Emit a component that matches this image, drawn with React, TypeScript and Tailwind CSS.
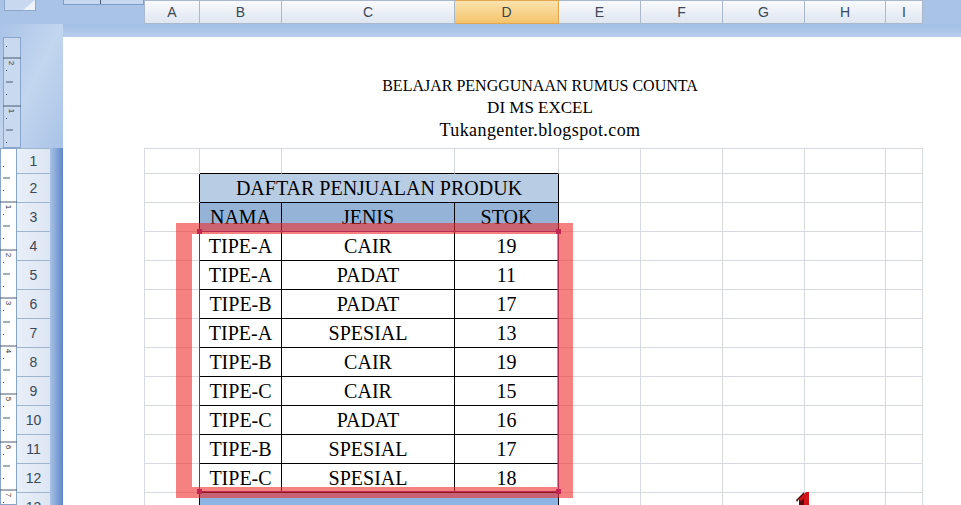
import React from "react";

const COLS = [
  { label: "A", w: 55 },
  { label: "B", w: 82 },
  { label: "C", w: 173 },
  { label: "D", w: 104 },
  { label: "E", w: 82 },
  { label: "F", w: 82 },
  { label: "G", w: 82 },
  { label: "H", w: 81 },
  { label: "I", w: 37 },
];

const ROWS = [25, 29, 29, 29, 29, 29, 29, 29, 29, 29, 29, 29, 29];

const DATA = [
  ["TIPE-A", "CAIR", "19"],
  ["TIPE-A", "PADAT", "11"],
  ["TIPE-B", "PADAT", "17"],
  ["TIPE-A", "SPESIAL", "13"],
  ["TIPE-B", "CAIR", "19"],
  ["TIPE-C", "CAIR", "15"],
  ["TIPE-C", "PADAT", "16"],
  ["TIPE-B", "SPESIAL", "17"],
  ["TIPE-C", "SPESIAL", "18"],
];

function Ruler({ top, width, height, fill }: { top: number; width: number; height: number; fill: string }) {
  const ticks: React.ReactNode[] = [];
  for (let y = 10; y < 520; y += 12) {
    const local = y - top;
    if (local < 1 || local > height - 1) continue;
    const d = (((y - 154) % 48) + 48) % 48;
    if (d === 0) {
      const n = Math.abs((y - 154) / 48);
      if (n === 0) continue;
      ticks.push(
        <g key={y}>
          <line x1={0} x2={width} y1={local} y2={local} stroke="#4a5a70" strokeWidth={1} />
          <text
            x={8}
            y={local + 5}
            fontSize={8}
            fill="#333"
            textAnchor="middle"
            dominantBaseline="middle"
            transform={`rotate(90 8 ${local + 5})`}
            fontFamily="Liberation Sans, sans-serif"
          >
            {n}
          </text>
        </g>
      );
    } else if (d === 24) {
      ticks.push(<line key={y} x1={3} x2={10} y1={local} y2={local} stroke="#4a5a70" strokeWidth={1} />);
    } else {
      ticks.push(<rect key={y} x={3} y={local} width={1} height={1} fill="#4a5a70" />);
    }
  }
  return (
    <svg width={width} height={height} className="block shrink-0">
      <rect x={0.5} y={0.5} width={width - 1} height={height - 1} fill={fill} stroke="#8aa5cc" />
      {ticks}
    </svg>
  );
}

function ColumnHeaders() {
  return (
    <div className="flex h-[24px] shrink-0">
      <div className="w-[144px] shrink-0 flex items-start">
        <div className="ml-[4px] w-[32px] h-[11px] border border-t-0 border-[#8ea8cc] bg-[#c8d9ef] relative overflow-hidden">
          <svg width="30" height="10" className="block">
            <polygon points="30,0 30,10 18,10" fill="#eef3fa" />
          </svg>
        </div>
        <div className="ml-[27px] w-[81px] h-[5px] border border-t-0 border-[#7f9cc8] bg-[#c6d8ef] flex">
          <div className="ml-[36px] w-px h-[4px] bg-[#4a5a70]" />
        </div>
      </div>
      {COLS.map((c, i) => (
        <div
          key={c.label}
          style={{ width: i === 0 ? c.w + 1 : c.w }}
          className={
            c.label === "D"
              ? "shrink-0 h-[24px] border-r border-b border-t border-[#e2a651] bg-gradient-to-b from-[#fbe3ad] to-[#f4c46a] flex items-center justify-center text-[14px] text-[#3b4352]"
              : i === 0
              ? "shrink-0 h-[24px] border-l border-r border-b border-t border-[#a9b8cc] bg-gradient-to-b from-[#f8fafd] to-[#dfe6f0] flex items-center justify-center text-[14px] text-[#3b4858]"
              : "shrink-0 h-[24px] border-r border-b border-t border-[#a9b8cc] bg-gradient-to-b from-[#f8fafd] to-[#dfe6f0] flex items-center justify-center text-[14px] text-[#3b4858]"
          }
        >
          {c.label}
        </div>
      ))}
      <div className="flex-1" />
    </div>
  );
}

function Gutter() {
  return (
    <div className="w-[63px] shrink-0 flex flex-col">
      <div className="h-[124px] shrink-0 pl-[3px] pt-[13px] bg-gradient-to-br from-[#a9c3e7] via-[#c3d6ef] to-[#a9c3e7]">
        <Ruler top={37} width={18} height={111} fill="#c9daf0" />
      </div>
      <div className="flex flex-1 min-h-0">
        <div className="w-[17px] shrink-0 bg-white">
          <Ruler top={148} width={17} height={357} fill="#ffffff" />
        </div>
        <div className="w-[33px] shrink-0 flex flex-col border-t border-[#9fb4cf]">
          {ROWS.map((h, i) => (
            <div
              key={i}
              style={{ height: h }}
              className="shrink-0 border-b border-[#9fb4cf] bg-gradient-to-r from-[#e9eff8] to-[#dce6f3] flex items-center justify-center text-[14px] text-[#3b4858]"
            >
              {i + 1}
            </div>
          ))}
        </div>
        <div className="w-[13px] shrink-0 bg-gradient-to-r from-[#a9c3e7] to-[#5f87c6]" />
      </div>
    </div>
  );
}

const GRID = "border-r border-b border-[#d6d9de]";
const SERIF = "font-['Liberation_Serif',serif] text-[20px] leading-none text-black flex items-center justify-center";

function Sheet() {
  const cells: React.ReactNode[] = [];
  ROWS.forEach((_, ri) => {
    const r = ri + 1;
    // column A
    cells.push(
      <div
        key={`${r}-A`}
        className={
          r >= 4 && r <= 12
            ? "border-r border-b border-r-[#23288c] border-b-[#d6d9de]"
            : r >= 2
            ? "border-r border-b border-r-black border-b-[#d6d9de]"
            : GRID
        }
      />
    );
    // columns B-D
    if (r === 1) {
      for (let c = 1; c <= 3; c++) {
        cells.push(<div key={`${r}-${c}`} className="border-r border-b border-r-[#d6d9de] border-b-black" />);
      }
    } else if (r === 2) {
      cells.push(
        <div key="title" className={`col-span-3 border-r border-b border-black bg-[#b8cce4] ${SERIF}`}>
          DAFTAR PENJUALAN PRODUK
        </div>
      );
    } else if (r === 3) {
      ["NAMA", "JENIS", "STOK"].forEach((t) =>
        cells.push(
          <div key={t} className={`border-r border-b border-black bg-[#95b3d7] ${SERIF}`}>
            {t}
          </div>
        )
      );
    } else if (r <= 12) {
      DATA[r - 4].forEach((t, c) =>
        cells.push(
          <div key={`${r}-${c}`} className={`border-r border-b border-black bg-white ${SERIF}`}>
            {t}
          </div>
        )
      );
    } else {
      cells.push(<div key="total" className="col-span-3 border-r border-b border-black bg-[#8db4e2]" />);
    }
    // columns E-I
    for (let c = 4; c <= 8; c++) {
      cells.push(<div key={`${r}-${c}`} className={GRID} />);
    }
  });

  return (
    <div className="relative mt-[7px] w-max grid grid-cols-[55px_82px_173px_104px_82px_82px_82px_81px_37px] grid-rows-[25px_repeat(12,29px)] border-l border-t border-[#d6d9de]">
      {cells}

      {/* selected range B4:D12 */}
      <div className="absolute left-[54px] top-[82px] w-[360px] h-[261px] border border-[#6d2b8c] pointer-events-none">
        <div className="absolute -left-[3px] -top-[3px] w-[5px] h-[5px] bg-[#7a1f86]" />
        <div className="absolute -right-[3px] -top-[3px] w-[5px] h-[5px] bg-[#7a1f86]" />
        <div className="absolute -left-[3px] -bottom-[3px] w-[5px] h-[5px] bg-[#7a1f86]" />
        <div className="absolute -right-[3px] -bottom-[3px] w-[5px] h-[5px] bg-[#7a1f86]" />
      </div>

      {/* red highlight frame */}
      <div className="absolute left-[31px] top-[74px] w-[397px] h-[275px] border-l-[16px] border-r-[16px] border-t-[11px] border-b-[11px] border-[rgba(240,45,45,0.6)] pointer-events-none" />

      {/* red "1" marker peeking in at the bottom */}
      <svg className="absolute left-[647px] top-[342px]" width="20" height="16" viewBox="0 0 20 16">
        <polygon points="4,9 12,1 12,16 7,16 7,8 5,11" fill="#5a0d0d" />
        <polygon points="7,8 14,1 17,1 17,16 12,16 12,7 9,10" fill="#d2141a" />
      </svg>
    </div>
  );
}

function Page() {
  return (
    <div className="flex-1 min-h-0 bg-white pl-[81px] pt-[38px] overflow-hidden">
      <div className="w-[792px] text-center font-['Liberation_Serif',serif] text-black leading-[22px]">
        <div className="text-[16px]">BELAJAR PENGGUNAAN RUMUS COUNTA</div>
        <div className="text-[17px]">DI MS EXCEL</div>
        <div className="text-[18px] tracking-[0.4px]">Tukangenter.blogspot.com</div>
      </div>
      <Sheet />
    </div>
  );
}

export default function App() {
  return (
    <div className="w-[961px] h-[505px] overflow-hidden bg-[#a9c3e7] flex flex-col font-['Liberation_Sans',sans-serif]">
      <ColumnHeaders />
      <div className="flex flex-1 min-h-0">
        <Gutter />
        <div className="flex-1 flex flex-col min-h-0">
          <div className="h-[13px] shrink-0 bg-gradient-to-b from-[#a3bfe5] to-[#b6ccec]" />
          <Page />
        </div>
      </div>
    </div>
  );
}
